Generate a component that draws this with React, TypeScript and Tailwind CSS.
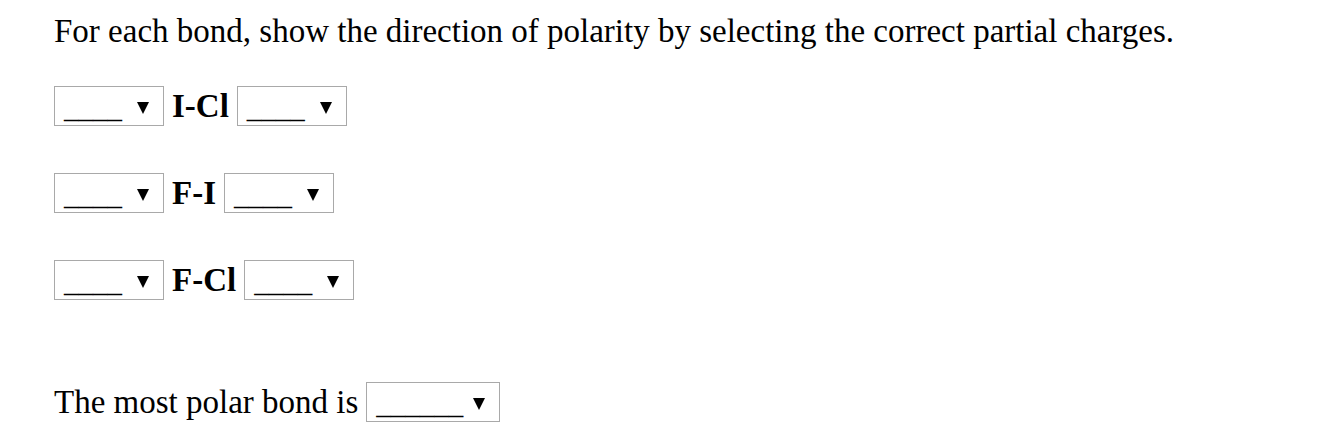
const Pick = ({ blanks = "____", w = "w-[110px]" }: { blanks?: string; w?: string }) => (
  <div
    className={`${w} h-10 border border-[#a9a9a9] bg-white flex items-center justify-between pl-[9px] pr-[14px]`}
  >
    <span className="text-[29px] leading-none text-black translate-y-[2px]">{blanks}</span>
    <svg width="12" height="13" viewBox="0 0 12 13" className="translate-y-[1px]">
      <path d="M0 1h12L6 13z" fill="#000" />
    </svg>
  </div>
)

const Bond = ({ name }: { name: string }) => (
  <div className="flex items-center gap-[8px]">
    <Pick />
    <span className="font-bold text-[33px] leading-none">{name}</span>
    <Pick />
  </div>
)

export default function App() {
  return (
    <div className="min-h-screen bg-white text-black px-[54px] pt-[13px] font-['Liberation_Serif',serif]">
      <p className="text-[33px] leading-[37px]">
        For each bond, show the direction of polarity by selecting the correct partial charges.
      </p>
      <div className="mt-[36px] flex flex-col gap-[47px]">
        <Bond name="I-Cl" />
        <Bond name="F-I" />
        <Bond name="F-Cl" />
      </div>
      <div className="mt-[82px] flex items-center gap-[8px]">
        <span className="text-[33px] leading-none">The most polar bond is</span>
        <Pick blanks="______" w="w-[134px]" />
      </div>
    </div>
  )
}
